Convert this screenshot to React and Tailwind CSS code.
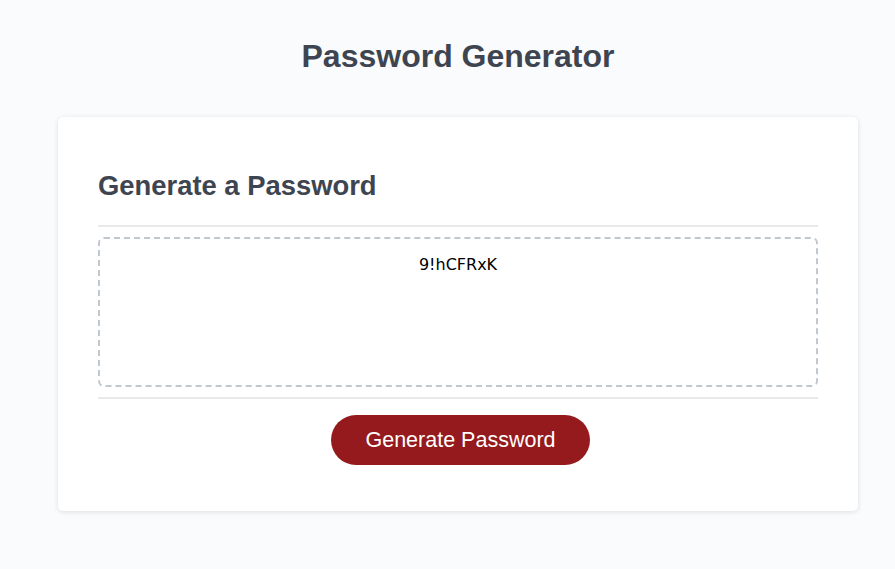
import { useState } from "react";

const chars = "ABCDEFGHIJKLMNOPQRSTUVWXYZabcdefghijklmnopqrstuvwxyz0123456789!@#$%^&*";

export default function App() {
    const [password, setPassword] = useState("9!hCFRxK");

    const generate = () => {
        let out = "";
        for (let i = 0; i < 8; i++) out += chars[Math.floor(Math.random() * chars.length)];
        setPassword(out);
    };

    return (
        <div className="min-h-screen bg-[#f9fbfd] text-[#3e4550] font-['Liberation_Sans',Arial,sans-serif] pb-10">
            <div className="ml-[58px] w-[800px]">
                <h1 className="pt-[40px] text-center text-[32px] leading-[32px] font-bold">Password Generator</h1>

                <div className="mt-[45px] bg-white rounded-[5px] shadow-[0_1px_5px_rgba(0,0,0,0.12)] px-[40px] pt-[55px] pb-[46px]">
                    <h2 className="text-[27.4px] leading-[27px] font-bold">Generate a Password</h2>
                    <div className="mt-[26px] h-[2px] bg-[#e7e9eb]"></div>

                    <textarea
                        readOnly
                        value={password}
                        placeholder="Your Secure Password"
                        className="block w-full h-[150px] mt-[10px] resize-none overflow-hidden border-2 border-dashed border-[#c0c7cf] rounded-[6px] pt-[16px] px-[15px] text-center text-black text-[16px] leading-[19px] font-['DejaVu_Sans',sans-serif] outline-none"
                    />

                    <div className="mt-[10px] h-[2px] bg-[#e7e9eb]"></div>
                    <div className="mt-[16px] flex justify-center">
                        <button
                            onClick={generate}
                            className="ml-[5px] h-[50px] px-[34px] rounded-full bg-[#941a1d] text-white text-[21.5px] leading-[22px] cursor-pointer"
                        >
                            Generate Password
                        </button>
                    </div>
                </div>
            </div>
        </div>
    );
}
